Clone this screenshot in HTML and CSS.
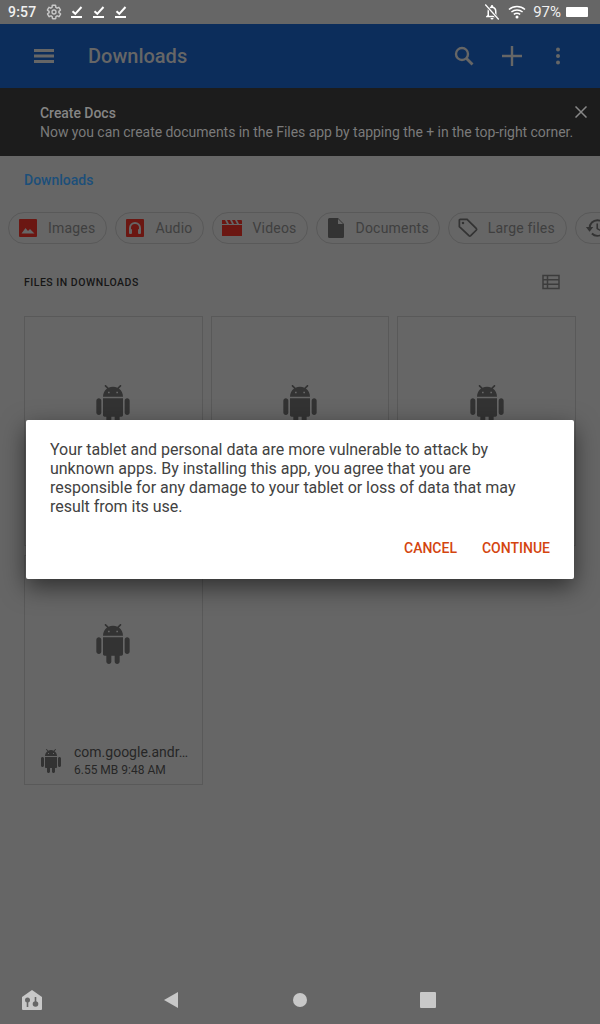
FILE: index.html
```html
<!DOCTYPE html>
<html lang="en">
<head>
  <meta charset="UTF-8" />
  <meta name="viewport" content="width=device-width, initial-scale=1.0"/>
  <title>Downloads</title>
  <link rel="stylesheet" href="styles.css">
</head>
<body>

<svg class="defs" width="0" height="0">
  <symbol id="android" viewBox="0 0 24 24">
    <path d="M6 18c0 .55.45 1 1 1h1v3.5c0 .83.67 1.5 1.5 1.5s1.5-.67 1.5-1.5V19h2v3.5c0 .83.67 1.5 1.5 1.5s1.5-.67 1.5-1.5V19h1c.55 0 1-.45 1-1V8H6v10zM3.5 8C2.67 8 2 8.67 2 9.5v7c0 .83.67 1.5 1.5 1.5S5 17.33 5 16.5v-7C5 8.67 4.33 8 3.5 8zm17 0c-.83 0-1.5.67-1.5 1.5v7c0 .83.67 1.5 1.5 1.5s1.5-.67 1.5-1.5v-7c0-.83-.67-1.5-1.5-1.5zm-4.97-5.84l1.3-1.3c.2-.2.2-.51 0-.71-.2-.2-.51-.2-.71 0l-1.48 1.48C13.85 1.23 12.95 1 12 1c-.96 0-1.86.23-2.66.63L7.85.15c-.2-.2-.51-.2-.71 0-.2.2-.2.51 0 .71l1.31 1.31C6.97 3.26 6 5.01 6 7h12c0-1.99-.97-3.75-2.47-4.84zM10 5H9V4h1v1zm5 0h-1V4h1v1z"/>
  </symbol>
  <symbol id="check" viewBox="0 0 12 12">
    <path d="M1.5 5.200l2.800 2.600L10.500 1" fill="none" stroke="#fff" stroke-width="2"/>
    <path d="M0 11h11" stroke="#fff" stroke-width="2"/>
  </symbol>
</svg>

<div class="statusbar">
  <span class="clock">9:57</span>
  <svg class="st-gear" width="16" height="16" viewBox="0 0 24 24"><path fill="none" stroke="#c8c8c8" stroke-width="2.200" d="M19.400 13c.1-.3.1-.7.1-1s0-.7-.1-1l2.100-1.600c.2-.2.2-.4.1-.6l-2-3.500c-.1-.2-.4-.3-.6-.2l-2.500 1c-.5-.4-1.100-.7-1.700-1l-.4-2.600c0-.3-.2-.5-.5-.5h-4c-.3 0-.5.2-.5.5l-.4 2.600c-.6.3-1.200.6-1.700 1l-2.500-1c-.2-.1-.5 0-.6.2l-2 3.500c-.1.2-.1.5.1.6L4.600 11c-.1.3-.1.7-.1 1s0 .7.1 1l-2.100 1.600c-.2.2-.2.4-.1.6l2 3.500c.1.2.4.3.6.2l2.500-1c.5.4 1.100.7 1.700 1l.4 2.600c0 .3.2.5.5.5h4c.3 0 .5-.2.5-.5l.4-2.600c.6-.3 1.200-.6 1.700-1l2.500 1c.2.1.5 0 .6-.2l2-3.500c.1-.2.1-.4-.1-.6z"/><circle cx="12" cy="12" r="3" fill="none" stroke="#c8c8c8" stroke-width="2"/></svg>
  <svg class="st-check" width="12" height="12"><use href="#check"/></svg>
  <svg class="st-check" width="12" height="12"><use href="#check"/></svg>
  <svg class="st-check" width="12" height="12"><use href="#check"/></svg>
  <span class="grow"></span>
  <svg width="18" height="18" viewBox="0 0 24 24"><path fill="#fff" d="M12 22a2 2 0 002-2h-4a2 2 0 002 2zm6-6v-5c0-3.100-1.600-5.600-4.500-6.300V4a1.500 1.500 0 00-3 0v.700C7.600 5.400 6 7.900 6 11v5l-2 2v1h16v-1zm-2 1H8v-6c0-2.500 1.500-4.500 4-4.500s4 2 4 4.500z"/><path d="M3 2l18 20" stroke="#666" stroke-width="3.500"/><path d="M3 2l18 20" stroke="#fff" stroke-width="1.600"/></svg>
  <svg class="st-wifi" width="18" height="14" viewBox="0 0 18 14"><path d="M1 4.500c4.500-4 11.500-4 16 0M3.400 7c3.200-2.700 8-2.700 11.200 0M5.800 9.400c1.900-1.400 4.500-1.400 6.400 0" fill="none" stroke="#fff" stroke-width="1.500"/><circle cx="9" cy="12" r="1.500" fill="#fff"/></svg>
  <span class="battery-txt">97%</span>
  <span class="battery"></span>
</div>

<header class="appbar">
  <svg width="24" height="24" viewBox="0 0 24 24" class="menu-ic"><path fill="#666" d="M2 5h20v3H2zM2 10.500h20v3H2zM2 16h20v3H2z"/></svg>
  <h1>Downloads</h1>
  <svg class="ab-search" width="24" height="24" viewBox="0 0 24 24"><circle cx="10" cy="10" r="6" fill="none" stroke="#666" stroke-width="2.400"/><path d="M14.500 14.500l6 6" stroke="#666" stroke-width="2.800"/></svg>
  <svg class="ab-plus" width="24" height="24" viewBox="0 0 24 24"><path d="M12 2v20M2 12h20" stroke="#666" stroke-width="2.400"/></svg>
  <svg class="ab-more" width="8" height="20" viewBox="0 0 8 20"><circle cx="4" cy="3.500" r="2" fill="#666"/><circle cx="4" cy="10" r="2" fill="#666"/><circle cx="4" cy="16.500" r="2" fill="#666"/></svg>
</header>

<div class="banner">
  <div class="banner-text">
    <b>Create Docs</b>
    <span>Now you can create documents in the Files app by tapping the + in the top-right corner.</span>
  </div>
  <svg class="banner-x" width="12" height="12" viewBox="0 0 12 12"><path d="M.5.500l11 11M11.500.500l-11 11" stroke="#888" stroke-width="1.500"/></svg>
</div>

<main class="content">
  <a class="crumb">Downloads</a>

  <div class="chips">
    <div class="chip">
      <svg width="18" height="18" viewBox="0 0 18 18"><rect width="18" height="18" rx="1" fill="#6b1712"/><path d="M2.500 14.500l4-5.500 2.500 3 2-2 4.500 4.500z" fill="#666"/></svg>
      <span>Images</span>
    </div>
    <div class="chip">
      <svg width="18" height="18" viewBox="0 0 18 18"><rect width="18" height="18" rx="1" fill="#6b1712"/><path d="M4 13V9a5 5 0 0110 0v4" fill="none" stroke="#666" stroke-width="2"/><rect x="3" y="10" width="3" height="5" rx="1" fill="#666"/><rect x="12" y="10" width="3" height="5" rx="1" fill="#666"/></svg>
      <span>Audio</span>
    </div>
    <div class="chip chip-video">
      <svg width="20" height="16" viewBox="0 0 20 16"><path fill="#6b1712" d="M0 5h20v10.500a.500.500 0 01-.500.500H.500a.500.500 0 01-.500-.500zM0 0h3l2 4H0zM5 0h3l2 4H7zM10 0h3l2 4h-3zM15 0h4a1 1 0 011 1v3h-3z"/></svg>
      <span>Videos</span>
    </div>
    <div class="chip chip-doc">
      <svg width="16" height="20" viewBox="0 0 16 20"><path fill="#333" d="M1.500 0H10l6 6v12.500a1.500 1.500 0 01-1.500 1.500h-13A1.500 1.500 0 010 18.500v-17A1.500 1.500 0 011.500 0z"/><path fill="#666" d="M10 1v5h5z"/></svg>
      <span>Documents</span>
    </div>
    <div class="chip chip-tag">
      <svg width="20" height="20" viewBox="0 0 22 22"><path fill="none" stroke="#333" stroke-width="1.900" d="M1.500 2.500a1 1 0 011-1h7.500l10 10a1.500 1.500 0 010 2l-6 6a1.500 1.500 0 01-2 0l-10.500-10z"/><circle cx="5.500" cy="5.500" r="1.400" fill="#333"/></svg>
      <span>Large files</span>
    </div>
    <div class="chip chip-recent">
      <svg width="22" height="22" viewBox="0 0 24 24"><path fill="none" stroke="#333" stroke-width="2" d="M5 12a8.500 8.500 0 118.500 8.500c-2.300 0-4.400-.900-6-2.500"/><path fill="#333" d="M1 11h8l-4 5zM12.500 7h1.700v5.300l3.800 2.200-.800 1.400-4.700-2.800z"/></svg>
    </div>
  </div>

  <div class="section-head">
    <h2>FILES IN DOWNLOADS</h2>
    <svg width="18" height="16" viewBox="0 0 18 16"><path fill="none" stroke="#3c3c3c" stroke-width="1.500" d="M1 1.500h16v13H1zM1 5.800h16M1 10.200h16M5.500 1.500v13"/></svg>
  </div>

  <div class="grid">
    <div class="file">
      <svg class="file-big" width="40" height="40"><use href="#android"/></svg>
    </div>
    <div class="file">
      <svg class="file-big" width="40" height="40"><use href="#android"/></svg>
    </div>
    <div class="file">
      <svg class="file-big" width="40" height="40"><use href="#android"/></svg>
    </div>
    <div class="file">
      <svg class="file-big" width="40" height="40"><use href="#android"/></svg>
      <div class="file-info">
        <svg width="24" height="24"><use href="#android"/></svg>
        <div class="file-meta"><p class="file-name">com.google.andr…</p><p class="file-size">6.55 MB 9:48 AM</p></div>
      </div>
    </div>
  </div>
</main>

<nav class="navbar">
  <svg class="nav-home" width="22" height="22" viewBox="0 0 22 22"><path fill="#c8c8c8" d="M11 1l10 7v12a1 1 0 01-1 1H2a1 1 0 01-1-1V8z"/><circle cx="6.500" cy="11" r="2.500" fill="#666"/><rect x="5.700" y="12" width="1.600" height="6" fill="#666"/><circle cx="14.500" cy="15" r="2.800" fill="#666"/><rect x="13.700" y="8" width="1.600" height="6" fill="#666"/></svg>
  <svg class="nav-back" width="16" height="18" viewBox="0 0 16 18"><path fill="#c8c8c8" d="M15 1v16L1 9z"/></svg>
  <span class="nav-circle"></span>
  <span class="nav-square"></span>
</nav>

<div class="dialog">
  <p>Your tablet and personal data are more vulnerable to attack by unknown apps. By installing this app, you agree that you are responsible for any damage to your tablet or loss of data that may result from its use.</p>
  <div class="dialog-actions">
    <button>CANCEL</button>
    <button>CONTINUE</button>
  </div>
</div>

</body>
</html>
```

FILE: styles.css
```css
* {
  box-sizing: border-box;
}
html, body {
  margin: 0;
  height: 100%;
}
body {
  position: relative;
  width: 600px;
  height: 1024px;
  overflow: hidden;
  display: flex;
  flex-direction: column;
  background: #666;
  font-family: Roboto, 'Liberation Sans', sans-serif;
  color: #333;
}
svg {
  display: block;
  flex: none;
}
.defs {
  position: absolute;
}
.grow {
  flex: 1;
}

/* status bar */
.statusbar {
  height: 24px;
  display: flex;
  align-items: center;
  padding: 0 12px 0 8px;
  color: #fff;
}
.clock {
  font-size: 14px;
  font-weight: 500;
  letter-spacing: 0.2px;
  color: #f0f0f0;
  margin-right: 10px;
}
.st-gear {
  margin-right: 9px;
}
.st-check {
  margin-right: 10px;
}
.st-wifi {
  margin-left: 7px;
}
.battery-txt {
  font-size: 15px;
  margin-left: 7px;
  color: #f0f0f0;
}
.battery {
  width: 22px;
  height: 10px;
  margin-left: 5px;
  background: #fff;
  border-radius: 1px;
}

/* app bar */
.appbar {
  height: 64px;
  background: #0c2d5b;
  display: flex;
  align-items: center;
  padding-left: 32px;
  flex: none;
}
.appbar h1 {
  margin: 0 0 0 32px;
  font-size: 20px;
  font-weight: 500;
  color: #666;
  flex: 1;
}
.ab-search {
  margin-right: 24px;
}
.ab-plus {
  margin-right: 30px;
}
.ab-more {
  margin-right: 38px;
}

/* banner */
.banner {
  height: 68px;
  flex: none;
  background: #1c1c1c;
  display: flex;
  align-items: center;
  padding: 2px 13px 0 40px;
}
.banner-text {
  flex: 1;
  min-width: 0;
  font-size: 14px;
  line-height: 19px;
  letter-spacing: -0.04px;
  white-space: nowrap;
  color: #7a7a7a;
}
.banner-text b {
  display: block;
  font-weight: 500;
  color: #858585;
}
.banner-x {
  align-self: flex-start;
  margin-top: 16px;
}

/* content */
.content {
  flex: 1;
  padding-top: 16px;
  overflow: hidden;
}
.crumb {
  display: block;
  margin-left: 24px;
  font-size: 14px;
  line-height: 16px;
  font-weight: 500;
  color: #1c4f7a;
}
.chips {
  display: flex;
  gap: 8px;
  margin-top: 24px;
  padding-left: 8px;
}
.chip {
  height: 32px;
  display: flex;
  align-items: center;
  padding: 0 11px 0 10px;
  gap: 11px;
  border: 1px solid #595959;
  border-radius: 16px;
  flex: none;
  font-size: 14px;
  letter-spacing: 0.2px;
  color: #3f3f3f;
}
.chip-video {
  padding: 0 10px 0 9px;
  gap: 10px;
}
.chip-doc {
  padding: 0 10px 0 11px;
  gap: 12px;
}
.chip-tag {
  padding-left: 9px;
  gap: 10px;
}
.chip-recent {
  padding-left: 9px;
  width: 60px;
}
.section-head {
  display: flex;
  align-items: center;
  justify-content: space-between;
  margin: 30px 0 0 24px;
  padding-right: 40px;
  height: 16px;
}
.section-head h2 {
  margin: 0;
  font-size: 10.5px;
  font-weight: 500;
  letter-spacing: 0.5px;
  color: #161616;
}
.grid {
  display: grid;
  grid-template-columns: repeat(3, 1fr);
  grid-auto-rows: 230px;
  column-gap: 8px;
  row-gap: 9px;
  margin: 26px 24px 0;
}
.file {
  border: 1px solid #595959;
  display: flex;
  flex-direction: column;
  align-items: center;
  padding-top: 68px;
  fill: #333;
}
.file-info {
  align-self: stretch;
  display: flex;
  align-items: center;
  margin-top: auto;
  padding: 0 0 5px 14px;
  gap: 11px;
}
.file-meta {
  min-width: 0;
}
.file-name {
  margin: 0;
  font-size: 14px;
  line-height: 18px;
  color: #262626;
  white-space: nowrap;
}
.file-size {
  margin: 0;
  font-size: 12px;
  line-height: 18px;
  color: #262626;
}

/* nav bar */
.navbar {
  height: 48px;
  flex: none;
  display: flex;
  align-items: center;
  padding-left: 21px;
}
.nav-back {
  margin-left: 120px;
}
.nav-circle {
  width: 14px;
  height: 14px;
  margin-left: 114px;
  background: #c8c8c8;
  border-radius: 50%;
}
.nav-square {
  width: 16px;
  height: 16px;
  margin-left: 113px;
  background: #c8c8c8;
  border-radius: 1px;
}

/* dialog */
.dialog {
  position: absolute;
  left: 26px;
  top: 420px;
  width: 548px;
  height: 159px;
  background: #fff;
  border-radius: 2px;
  padding: 20px 24px 0;
  box-shadow: 0 8px 24px rgba(0,0,0,0.55);
}
.dialog p {
  margin: 0;
  font-size: 16px;
  line-height: 19px;
  letter-spacing: -0.03px;
  color: #424242;
}
.dialog-actions {
  display: flex;
  justify-content: flex-end;
  gap: 25px;
  margin-top: 24px;
}
.dialog-actions button {
  background: none;
  border: none;
  padding: 0;
  font-family: inherit;
  font-size: 14px;
  line-height: 16px;
  font-weight: 500;
  color: #d4450f;
}
```
